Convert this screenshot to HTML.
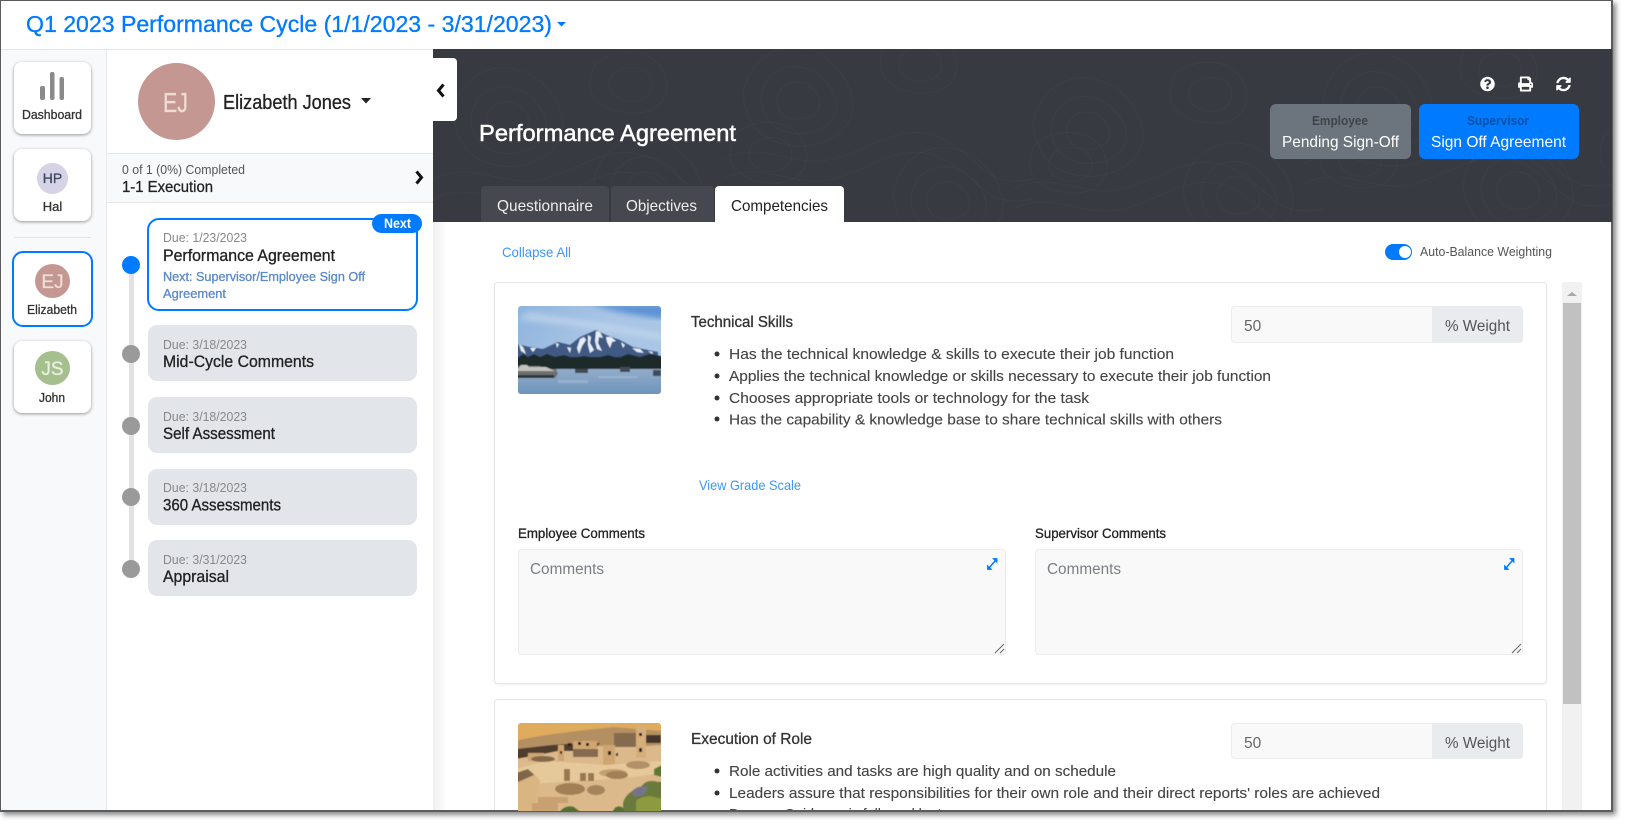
<!DOCTYPE html>
<html lang="en"><head><meta charset="utf-8"><title>Performance Agreement</title>
<style>
html,body{margin:0;padding:0;background:#fff;width:1625px;height:824px;overflow:hidden}
*{box-sizing:border-box}
.b{position:absolute}
#win{position:absolute;left:0;top:0;width:1613px;height:812px;border:1px solid #5c5c5c;border-width:1px 2px 2px 1px;box-shadow:3px 3px 5px #888;background:#fff}
text{font-family:"Liberation Sans",Arial,sans-serif}
.m{stroke-width:.3px}
.s{stroke-width:.12px;stroke:#444}
</style></head><body>
<div id="win"></div>
<div class="b" style="left:1px;top:49px;width:106px;height:761px;background:#f8f9fa;border-right:1px solid #e9e9e9;border-top:1px solid #e6e6e6"></div>
<div class="b" style="left:107px;top:49px;width:326px;height:761px;background:#fff;border-top:1px solid #e6e6e6"></div>
<div class="b" style="left:433px;top:222px;width:14px;height:588px;background:linear-gradient(90deg,#efefef,#fff)"></div>
<div class="b" style="left:14px;top:62px;width:77px;height:72px;background:#fff;border-radius:8px;box-shadow:0 1px 3px rgba(0,0,0,.4)"></div>
<div class="b" style="left:14px;top:149px;width:77px;height:72px;background:#fff;border-radius:8px;box-shadow:0 1px 3px rgba(0,0,0,.4)"></div>
<div class="b" style="left:14px;top:237px;width:77px;height:1px;background:#e4e5e7"></div>
<div class="b" style="left:12px;top:251px;width:81px;height:76px;background:#fff;border-radius:11px;border:2px solid #007bff"></div>
<div class="b" style="left:14px;top:341px;width:77px;height:72px;background:#fff;border-radius:8px;box-shadow:0 1px 3px rgba(0,0,0,.4)"></div>
<div class="b" style="left:107px;top:153px;width:326px;height:50px;background:#f8f9fa;border-top:1px solid #e6e6e6;border-bottom:1px solid #e6e6e6"></div>
<div class="b" style="left:129px;top:265px;width:5px;height:304px;background:#e2e2e2"></div>
<div class="b" style="left:147px;top:218px;width:271px;height:93px;background:#fff;border:2px solid #007bff;border-radius:12px"></div>
<div class="b" style="left:372px;top:214px;width:50px;height:19px;background:#007bff;border-radius:10px"></div>
<div class="b" style="left:148px;top:325px;width:269px;height:56px;background:#e2e5ea;border-radius:9px"></div>
<div class="b" style="left:148px;top:397px;width:269px;height:56px;background:#e2e5ea;border-radius:9px"></div>
<div class="b" style="left:148px;top:469px;width:269px;height:56px;background:#e2e5ea;border-radius:9px"></div>
<div class="b" style="left:148px;top:540px;width:269px;height:56px;background:#e2e5ea;border-radius:9px"></div>
<div class="b" style="left:122px;top:256px;width:18px;height:18px;border-radius:50%;background:#007bff"></div>
<div class="b" style="left:122px;top:345px;width:18px;height:18px;border-radius:50%;background:#9a9a9a"></div>
<div class="b" style="left:122px;top:417px;width:18px;height:18px;border-radius:50%;background:#9a9a9a"></div>
<div class="b" style="left:122px;top:488px;width:18px;height:18px;border-radius:50%;background:#9a9a9a"></div>
<div class="b" style="left:122px;top:560px;width:18px;height:18px;border-radius:50%;background:#9a9a9a"></div>
<div class="b" style="left:138px;top:63px;width:77px;height:77px;border-radius:50%;background:#c49792"></div>
<div class="b" style="left:37px;top:163px;width:31px;height:31px;border-radius:50%;background:#d6d3e6"></div>
<div class="b" style="left:35px;top:264px;width:35px;height:34px;border-radius:50%;background:#c49792"></div>
<div class="b" style="left:35px;top:351px;width:35px;height:34px;border-radius:50%;background:#a5bf8f"></div>

<!-- header -->
<div class="b" style="left:433px;top:49px;width:1179px;height:173px;background:#373a41;overflow:hidden">
<svg width="1179" height="173" style="position:absolute;left:0;top:0" fill="none" stroke="#fff" stroke-opacity=".028" stroke-width=".9">
<defs><g id="t"><path d="M30 40c20-30 60-25 80-5s30 50 5 70-70 15-85-10-10-40 0-55z"/><path d="M45 50c15-18 40-15 55 0s20 35 2 47-48 10-58-8-6-27 1-39z"/><path d="M58 60c8-10 24-9 32 0s10 20 0 26-28 6-33-4-4-15 1-22z"/><path d="M0 130c40-20 70 10 110 0s70-40 110-20 40 50 90 40"/><path d="M0 150c40-20 70 10 110 0s70-40 110-20 40 50 90 40"/><path d="M170 10c20-12 50-8 60 12s0 40-25 42-50-12-48-30 5-20 13-24z"/><path d="M184 22c10-6 28-4 33 6s0 22-14 24-28-6-27-16 3-11 8-14z"/></g></defs>
<use href="#t"/><use href="#t" x="290" y="-20"/><use href="#t" x="580" y="10"/><use href="#t" x="870" y="-15"/><use href="#t" x="140" y="70"/><use href="#t" x="440" y="80"/><use href="#t" x="730" y="75"/><use href="#t" x="1010" y="70"/>
</svg></div>
<div class="b" style="left:433px;top:58px;width:24px;height:63px;background:#fff;border-radius:0 4px 4px 0"></div>
<div class="b" style="left:481px;top:186px;width:128px;height:36px;background:#45484e;border-radius:4px 4px 0 0"></div>
<div class="b" style="left:611px;top:186px;width:103px;height:36px;background:#45484e;border-radius:4px 4px 0 0"></div>
<div class="b" style="left:715px;top:186px;width:129px;height:37px;background:#fff;border-radius:4px 4px 0 0"></div>
<div class="b" style="left:1270px;top:104px;width:141px;height:55px;background:#6c757d;border-radius:6px"></div>
<div class="b" style="left:1419px;top:104px;width:160px;height:55px;background:#007bff;border-radius:6px"></div>
<div class="b" style="left:1385px;top:244px;width:27px;height:16px;background:#007bff;border-radius:8px"></div>
<div class="b" style="left:1399px;top:246px;width:12px;height:12px;background:#fff;border-radius:50%"></div>

<!-- content -->
<div class="b" style="left:494px;top:282px;width:1053px;height:402px;background:#fff;border:1px solid #e6e6e6;border-radius:4px;box-shadow:0 1px 2px rgba(0,0,0,.06)"></div>
<div class="b" style="left:494px;top:699px;width:1053px;height:111px;background:#fff;border:1px solid #e6e6e6;border-bottom:0;border-radius:4px 4px 0 0"></div>
<div class="b" style="left:1562px;top:282px;width:20px;height:528px;background:#f1f1f1"></div>
<div class="b" style="left:1563px;top:303px;width:18px;height:401px;background:#c1c1c1"></div>
<div class="b" style="left:1231px;top:306px;width:202px;height:37px;background:#f9f9f9;border:1px solid #ececec;border-radius:4px 0 0 4px"></div>
<div class="b" style="left:1433px;top:306px;width:90px;height:37px;background:#e9ecef;border-radius:0 4px 4px 0"></div>
<div class="b" style="left:1231px;top:723px;width:202px;height:36px;background:#f9f9f9;border:1px solid #ececec;border-radius:4px 0 0 4px"></div>
<div class="b" style="left:1433px;top:723px;width:90px;height:36px;background:#e9ecef;border-radius:0 4px 4px 0"></div>
<div class="b" style="left:518px;top:549px;width:488px;height:106px;background:#f9f9f9;border:1px solid #ececec;border-radius:4px"></div>
<div class="b" style="left:1035px;top:549px;width:488px;height:106px;background:#f9f9f9;border:1px solid #ececec;border-radius:4px"></div>

<!-- images -->
<svg class="b" style="left:518px;top:306px;border-radius:3px" width="143" height="88" viewBox="0 0 143 88">
<defs><linearGradient id="sk" x1="0" y1="0" x2="1" y2=".4"><stop offset="0" stop-color="#8fb4dd"/><stop offset=".6" stop-color="#aac5e5"/><stop offset="1" stop-color="#a9c6e6"/></linearGradient>
<linearGradient id="wa" x1="0" y1="0" x2="0" y2="1"><stop offset="0" stop-color="#93acca"/><stop offset="1" stop-color="#6a93ba"/></linearGradient>
<filter id="bl"><feGaussianBlur stdDeviation=".5"/></filter><filter id="bs"><feGaussianBlur stdDeviation="3"/></filter></defs>
<rect width="143" height="88" fill="url(#sk)"/>
<path d="M72-2h75v15C120 10 95 6 72-2z" fill="#5d93d4" filter="url(#bs)"/>
<path d="M10 6c40 6 80 12 135 22v6C100 26 50 18 0 14z" fill="#cfdff0" opacity=".55" filter="url(#bs)"/>
<g filter="url(#bl)">
<path d="M-2 38l14 3 13 2 15-7 12 3 10-8 16-7 10 5 14 5 13 7 25 5v10H-2z" fill="#3f5a84"/>
<path d="M1 38l4 3 3 7-5-3zM12 42l6 0-3 4zM38 37l3 1-2 4zM49 41l4 1-1 5zM62 33l4-2 2 3-4 6-3 8-2-6zM70 29l3 2-1 6 4 7-4 3-2-8zM78 25l4 1 3 6-4-1-1 6 4 8-5-2-2-8zM88 31l5 0 5 4-4 1-2 6-3-6zM103 36l4 3-2 3zM114 42l8 1 4 4-7-1zM130 45l5 1-1 2z" fill="#e8eef6"/>
<rect x="-2" y="51" width="147" height="13" fill="#1e2a2c"/>
<path d="M0 52l5-4 5 3 6-3 6 3 7-3 8 3 9-2 10 3 10-2 12 2 12-3 10 3 10-4 12 3 10-3 11 2v8H0z" fill="#1e2a2c"/>
<rect x="-2" y="63" width="147" height="27" fill="url(#wa)"/>
<path d="M-2 60h24l4 3h12l2 5-3 4H-2z" fill="#6d6f70"/><path d="M3 59h6l2 2h17l9 4H-2z" fill="#c3c1bc"/>
<path d="M57 63h13v4H57zM102 61h10v5h-10zM135 64h8v6h-8z" fill="#434c54"/>
<rect x="-2" y="69" width="38" height="3" fill="#2e3336"/>
<path d="M40 74h30v3H40zM80 70h40v2H80z" fill="#a9bdd6" opacity=".6"/>
</g></svg>
<svg class="b" style="left:518px;top:723px;border-radius:3px 3px 0 0" width="143" height="88" viewBox="0 0 143 88">
<g filter="url(#bl)">
<rect x="-2" y="-2" width="147" height="92" fill="#dcb98a"/>
<path d="M-2-2h147v10L95 4C60 8 20 14-2 18z" fill="#dfab5c"/>
<path d="M-2 18C20 12 60 8 95 4l48 4v14l-30 2-55-2-30 6-30 2-20 4z" fill="#b48f62"/>
<path d="M-2 26l36-4 28-2 20 0-6 8H40l-20 4-22 4z" fill="#503d2d"/>
<path d="M96 10h22v14H96z" fill="#856a4d"/><path d="M128 12h15v8h-15z" fill="#45362a"/>
<path d="M118 3h10v32h-10z" fill="#d7ae7a"/><path d="M85 22h12v20H85zM40 22h6v16h-6zM55 18h24v8H55zM10 30h16v8H10z" fill="#cfa672"/>
<path d="M55 26h25v8H55z" fill="#866b4f"/>
<path d="M-2 46l30-8 30 2 30 2 57-4v12l-30 4-50 4-40 2-27 8z" fill="#e6c99b"/>
<path d="M121 10h3v3h-3zM121 25h3v4h-3zM90 28h3v4h-3zM98 30h2v3h-2zM50 20h3v3h-3zM60 19h3v3h-3zM68 20h3v3h-3zM42 28h2v3h-2z" fill="#2a1f17"/>
<ellipse cx="120" cy="42" rx="12" ry="4" fill="#b29067"/><ellipse cx="95" cy="50" rx="14" ry="4" fill="#c49f70"/>
<ellipse cx="99" cy="52" rx="11" ry="4" fill="#a27f54"/><ellipse cx="52" cy="66" rx="15" ry="6" fill="#a27f54"/><ellipse cx="78" cy="67" rx="9" ry="5" fill="#a5845b"/><ellipse cx="25" cy="36" rx="12" ry="3" fill="#856849"/>
<path d="M46 46h6v12h-6zM62 50h6v8h-6zM70 50h6v8h-6z" fill="#9a784f"/>
<path d="M-2 56l16-8 8 10-6 30H-2z" fill="#d9b582"/><path d="M-2 50l12-4 6 6-18 8z" fill="#80654a"/>
<path d="M20 74h30v6H20zM14 80h26v8H14z" fill="#c9a071"/>
<path d="M105 80c2-8 8-12 14-14s6-8 14-8 6 2 12 0v32H105z" fill="#6b7a3c"/><path d="M114 68c4-4 10-6 16-4l-4 8-10 2z" fill="#75758a"/><path d="M118 78c4-4 12-6 18-4l9 2v14h-27z" fill="#8d9a40"/><path d="M41 90c3-6 10-8 15-6l8 6zM94 90c2-6 6-8 10-6l4 6z" fill="#566f30"/><path d="M136 46l8-4v12l-8-2z" fill="#5e7736"/>
</g></svg>

<!-- all text & icons -->
<svg class="b" style="left:0;top:0" width="1625" height="824" viewBox="0 0 1625 824">
<defs><clipPath id="cl"><rect x="0" y="0" width="1612" height="810"/></clipPath></defs>
<text x="26" y="32" font-size="23" fill="#007bff" stroke="#007bff" class="m" textLength="526" lengthAdjust="spacingAndGlyphs">Q1 2023 Performance Cycle (1/1/2023 - 3/31/2023)</text>
<path d="M557 22h9l-4.500 4.500z" fill="#007bff"/>

<g fill="#8a8a8a"><rect x="40" y="86" width="5" height="14" rx="2"/><rect x="50" y="72" width="4.500" height="28" rx="2"/><rect x="59.500" y="77" width="4.500" height="23" rx="2"/></g>
<text x="22" y="119" font-size="13" fill="#333" stroke="#333" class="m" textLength="60" lengthAdjust="spacingAndGlyphs">Dashboard</text>
<text x="52.500" y="183" font-size="14" fill="#3d4a60" stroke="#3d4a60" text-anchor="middle" class="m">HP</text>
<text x="52.500" y="211" font-size="13" fill="#333" stroke="#333" text-anchor="middle" class="m">Hal</text>
<text x="52.500" y="288" font-size="19" fill="#efdcd6" stroke="#efdcd6" text-anchor="middle" class="m">EJ</text>
<text x="27" y="314" font-size="13" fill="#333" stroke="#333" class="m" textLength="50" lengthAdjust="spacingAndGlyphs">Elizabeth</text>
<text x="52.500" y="375" font-size="19" fill="#e8f0de" stroke="#e8f0de" text-anchor="middle" class="m">JS</text>
<text x="39" y="402" font-size="13" fill="#333" stroke="#333" class="m" textLength="26" lengthAdjust="spacingAndGlyphs">John</text>

<text x="163" y="112" font-size="28" fill="#eddcd4" stroke="#eddcd4" class="m" textLength="25" lengthAdjust="spacingAndGlyphs">EJ</text>
<text x="223" y="109" font-size="20" fill="#222" stroke="#222" class="m" textLength="128" lengthAdjust="spacingAndGlyphs">Elizabeth Jones</text>
<path d="M361 98h10l-5 5.500z" fill="#222"/>
<text x="122" y="174" font-size="13" fill="#555" textLength="123" lengthAdjust="spacingAndGlyphs">0 of 1 (0%) Completed</text>
<text x="122" y="192" font-size="16" fill="#222" stroke="#222" class="m" textLength="91" lengthAdjust="spacingAndGlyphs">1-1 Execution</text>
<path d="M416.500 171.500l5 6-5 6" fill="none" stroke="#111" stroke-width="3"/>
<path d="M443.500 84.500l-5 6 5 6" fill="none" stroke="#111" stroke-width="3"/>

<text x="384" y="228" font-size="13.500" font-weight="700" fill="#fff" textLength="27" lengthAdjust="spacingAndGlyphs">Next</text>
<text x="163" y="242" font-size="13" fill="#888" textLength="84" lengthAdjust="spacingAndGlyphs">Due: 1/23/2023</text>
<text x="163" y="261" font-size="16.500" fill="#222" stroke="#222" class="m" textLength="172" lengthAdjust="spacingAndGlyphs">Performance Agreement</text>
<text x="163" y="281" font-size="12.500" fill="#5b89c9" stroke="#5b89c9" class="m" textLength="202" lengthAdjust="spacingAndGlyphs">Next: Supervisor/Employee Sign Off</text>
<text x="163" y="298" font-size="12.500" fill="#5b89c9" stroke="#5b89c9" class="m" textLength="63" lengthAdjust="spacingAndGlyphs">Agreement</text>

<g font-size="13" fill="#888">
<text x="163" y="349" textLength="84" lengthAdjust="spacingAndGlyphs">Due: 3/18/2023</text>
<text x="163" y="421" textLength="84" lengthAdjust="spacingAndGlyphs">Due: 3/18/2023</text>
<text x="163" y="492" textLength="84" lengthAdjust="spacingAndGlyphs">Due: 3/18/2023</text>
<text x="163" y="564" textLength="84" lengthAdjust="spacingAndGlyphs">Due: 3/31/2023</text></g>
<g font-size="16.500" fill="#222" stroke="#222">
<text class="m" x="163" y="367" textLength="151" lengthAdjust="spacingAndGlyphs">Mid-Cycle Comments</text>
<text class="m" x="163" y="439" textLength="112" lengthAdjust="spacingAndGlyphs">Self Assessment</text>
<text class="m" x="163" y="510.500" textLength="118" lengthAdjust="spacingAndGlyphs">360 Assessments</text>
<text class="m" x="163" y="582" textLength="66" lengthAdjust="spacingAndGlyphs">Appraisal</text></g>

<text x="479" y="141" font-size="23" fill="#fff" stroke="#fff" style="stroke-width:.5px" textLength="257" lengthAdjust="spacingAndGlyphs">Performance Agreement</text>
<text x="497" y="211" font-size="16" fill="#eee" textLength="96" lengthAdjust="spacingAndGlyphs">Questionnaire</text>
<text x="626" y="211" font-size="16" fill="#eee" textLength="71" lengthAdjust="spacingAndGlyphs">Objectives</text>
<text x="731" y="211" font-size="16" fill="#222" textLength="97" lengthAdjust="spacingAndGlyphs">Competencies</text>

<g fill="#fff">
<svg x="1480" y="76.500" width="15" height="15" viewBox="0 0 512 512"><path d="M504 256c0 136.997-111.043 248-248 248S8 392.997 8 256C8 119.083 119.043 8 256 8s248 111.083 248 248zM262.655 90c-54.497 0-89.255 22.957-116.549 63.758-3.536 5.286-2.353 12.415 2.715 16.258l34.699 26.31c5.205 3.947 12.621 3.008 16.665-2.122 17.864-22.658 30.113-35.797 57.303-35.797 20.429 0 45.698 13.148 45.698 32.958 0 14.976-12.363 22.667-32.534 33.976C247.128 238.528 216 254.941 216 296v4c0 6.627 5.373 12 12 12h56c6.627 0 12-5.373 12-12v-1.333c0-28.462 83.186-29.647 83.186-106.667 0-58.002-60.165-102-116.531-102zM256 338c-25.365 0-46 20.635-46 46 0 25.364 20.635 46 46 46s46-20.636 46-46c0-25.365-20.635-46-46-46z"/></svg>
<svg x="1518" y="76.500" width="15" height="15" viewBox="0 0 512 512"><path d="M448 192V77.250c0-8.490-3.370-16.620-9.370-22.630L393.370 9.370c-6-6-14.140-9.370-22.630-9.370H96C78.330 0 64 14.330 64 32v160c-35.350 0-64 28.650-64 64v112c0 8.840 7.160 16 16 16h48v96c0 17.670 14.330 32 32 32h320c17.670 0 32-14.330 32-32v-96h48c8.840 0 16-7.160 16-16V256c0-35.350-28.650-64-64-64zm-64 256H128v-96h256v96zm0-224H128V64h192v48c0 8.840 7.160 16 16 16h48v96zm48 72c-13.250 0-24-10.750-24-24 0-13.260 10.750-24 24-24s24 10.740 24 24c0 13.250-10.750 24-24 24z"/></svg>
<svg x="1556" y="76.500" width="15" height="15" viewBox="0 0 512 512"><path d="M370.720 133.280C339.458 104.008 298.888 87.962 255.848 88c-77.458.068-144.328 53.178-162.791 126.850-1.344 5.363-6.122 9.150-11.651 9.150H24.103c-7.498 0-13.194-6.807-11.807-14.176C33.933 94.924 134.813 8 256 8c66.448 0 126.791 26.136 171.315 68.685L463.030 40.970C478.149 25.851 504 36.559 504 57.941V192c0 13.255-10.745 24-24 24H345.941c-21.382 0-32.090-25.851-16.971-40.971l41.750-41.749zM32 296h134.059c21.382 0 32.090 25.851 16.971 40.971l-41.750 41.750c31.262 29.273 71.835 45.319 114.876 45.280 77.418-.07 144.315-53.144 162.787-126.849 1.344-5.363 6.122-9.150 11.651-9.150h57.304c7.498 0 13.194 6.807 11.807 14.176C478.067 417.076 377.187 504 256 504c-66.448 0-126.791-26.136-171.315-68.685L48.970 471.030C33.851 486.149 8 475.441 8 454.059V320c0-13.255 10.745-24 24-24z"/></svg>
</g>

<text x="1312" y="125" font-size="12.500" font-weight="700" fill="#3f4449" textLength="56" lengthAdjust="spacingAndGlyphs">Employee</text>
<text x="1282" y="147" font-size="16" fill="#fff" textLength="117" lengthAdjust="spacingAndGlyphs">Pending Sign-Off</text>
<text x="1467" y="125" font-size="12.500" font-weight="700" fill="#0050a8" textLength="62" lengthAdjust="spacingAndGlyphs">Supervisor</text>
<text x="1431" y="147" font-size="16" fill="#fff" textLength="135" lengthAdjust="spacingAndGlyphs">Sign Off Agreement</text>

<text x="502" y="257" font-size="14" fill="#3b97ff" textLength="69" lengthAdjust="spacingAndGlyphs">Collapse All</text>
<text x="1420" y="256" font-size="12.500" fill="#555" textLength="132" lengthAdjust="spacingAndGlyphs">Auto-Balance Weighting</text>
<path d="M1567 296l5-4 5 4z" fill="#a8a8a8"/>

<text x="691" y="327" font-size="15.500" fill="#333" stroke="#333" class="m" textLength="102" lengthAdjust="spacingAndGlyphs">Technical Skills</text>
<g fill="#444" font-size="15">
<circle cx="717" cy="354" r="2.500" fill="#333"/><text class="s" x="729" y="359" textLength="445" lengthAdjust="spacingAndGlyphs">Has the technical knowledge &amp; skills to execute their job function</text>
<circle cx="717" cy="376" r="2.500" fill="#333"/><text class="s" x="729" y="381" textLength="542" lengthAdjust="spacingAndGlyphs">Applies the technical knowledge or skills necessary to execute their job function</text>
<circle cx="717" cy="398" r="2.500" fill="#333"/><text class="s" x="729" y="403" textLength="360" lengthAdjust="spacingAndGlyphs">Chooses appropriate tools or technology for the task</text>
<circle cx="717" cy="419" r="2.500" fill="#333"/><text class="s" x="729" y="424.500" textLength="493" lengthAdjust="spacingAndGlyphs">Has the capability &amp; knowledge base to share technical skills with others</text>
</g>
<text x="1244" y="331" font-size="15.500" fill="#666">50</text>
<text x="1445" y="331" font-size="15.500" fill="#555" textLength="65" lengthAdjust="spacingAndGlyphs">% Weight</text>
<text x="699" y="490" font-size="14" fill="#3b97ff" textLength="102" lengthAdjust="spacingAndGlyphs">View Grade Scale</text>
<text x="518" y="538" font-size="13.500" fill="#222" stroke="#222" class="m" textLength="127" lengthAdjust="spacingAndGlyphs">Employee Comments</text>
<text x="1035" y="538" font-size="13.500" fill="#222" stroke="#222" class="m" textLength="131" lengthAdjust="spacingAndGlyphs">Supervisor Comments</text>
<text x="530" y="574" font-size="15.500" fill="#7a7f85" textLength="74" lengthAdjust="spacingAndGlyphs">Comments</text>
<text x="1047" y="574" font-size="15.500" fill="#7a7f85" textLength="74" lengthAdjust="spacingAndGlyphs">Comments</text>
<g stroke="#007bff" fill="#007bff">
<path d="M989 568l6-7" stroke-width="1.500"/><path d="M987.500 565.500v4h4zM997 562.500v-4h-4z" stroke-width=".8"/>
<path d="M1506 568l6-7" stroke-width="1.500"/><path d="M1504.500 565.500v4h4zM1514 562.500v-4h-4z" stroke-width=".8"/></g>
<g stroke="#666" stroke-width="1" fill="none"><path d="M995 653l9-9M1000 653l4-4M1512 653l9-9M1517 653l4-4"/></g>

<g clip-path="url(#cl)">
<text x="691" y="744" font-size="15.500" fill="#333" stroke="#333" class="m" textLength="121" lengthAdjust="spacingAndGlyphs">Execution of Role</text>
<g fill="#444" font-size="15">
<circle cx="717" cy="771" r="2.500" fill="#333"/><text class="s" x="729" y="776" textLength="387" lengthAdjust="spacingAndGlyphs">Role activities and tasks are high quality and on schedule</text>
<circle cx="717" cy="793" r="2.500" fill="#333"/><text class="s" x="729" y="798" textLength="651" lengthAdjust="spacingAndGlyphs">Leaders assure that responsibilities for their own role and their direct reports' roles are achieved</text>
<circle cx="717" cy="814" r="2.500" fill="#333"/><text class="s" x="729" y="819" textLength="240" lengthAdjust="spacingAndGlyphs">Process Guidance is followed by team</text>
</g></g>
<text x="1244" y="748" font-size="15.500" fill="#666">50</text>
<text x="1445" y="748" font-size="15.500" fill="#555" textLength="65" lengthAdjust="spacingAndGlyphs">% Weight</text>
</svg>
</body></html>
